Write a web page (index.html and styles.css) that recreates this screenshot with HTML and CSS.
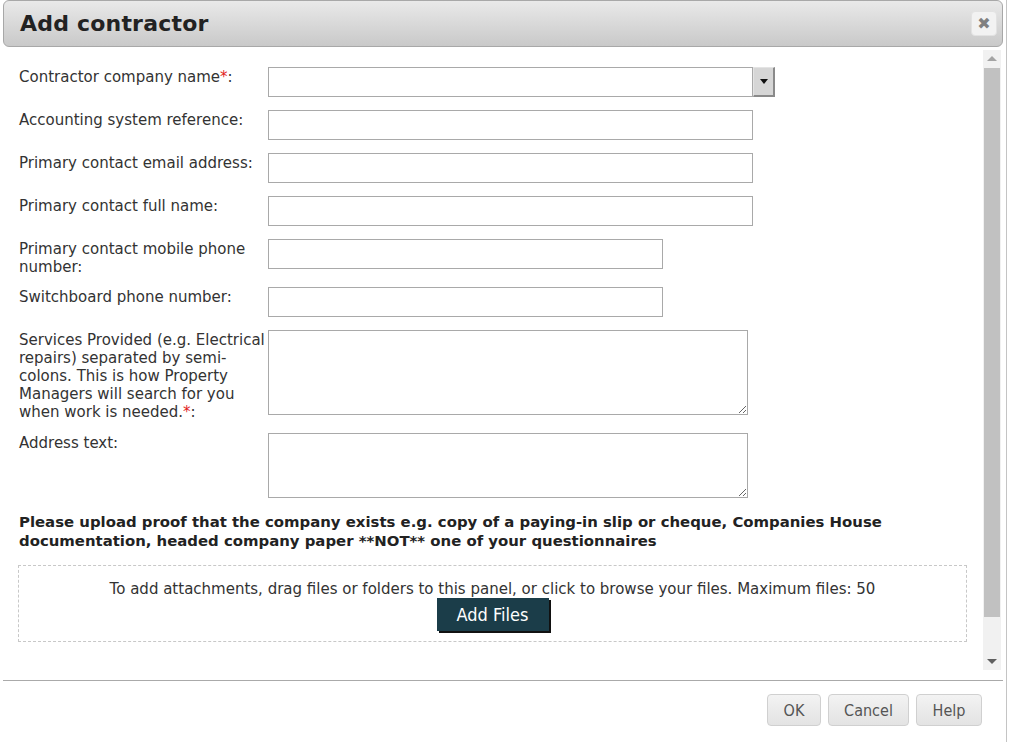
FILE: index.html
```html
<!DOCTYPE html>
<html>
<head>
<meta charset="utf-8">
<link rel="stylesheet" href="styles.css">
</head>
<body>
<div class="page">
  <div class="dialog">
    <div class="header">
      <h1 class="title">Add contractor</h1>
      <button class="close" type="button">&#x2716;</button>
    </div>
    <div class="content">
      <div class="form">
        <div class="row">
          <label class="label">Contractor company name<span class="req">*</span>:</label>
          <div class="combo">
            <input class="input input-wide" type="text">
            <span class="combo-btn"><span class="combo-arrow"></span></span>
          </div>
        </div>
        <div class="row">
          <label class="label">Accounting system reference:</label>
          <input class="input input-wide" type="text">
        </div>
        <div class="row">
          <label class="label">Primary contact email address:</label>
          <input class="input input-wide" type="text">
        </div>
        <div class="row">
          <label class="label">Primary contact full name:</label>
          <input class="input input-wide" type="text">
        </div>
        <div class="row row-tight">
          <label class="label">Primary contact mobile phone number:</label>
          <input class="input input-mid" type="text">
        </div>
        <div class="row">
          <label class="label">Switchboard phone number:</label>
          <input class="input input-mid" type="text">
        </div>
        <div class="row">
          <label class="label">Services Provided (e.g. Electrical repairs) separated by semi-colons. This is how Property Managers will search for you when work is needed.<span class="req">*</span>:</label>
          <textarea class="textarea textarea-tall"></textarea>
        </div>
        <div class="row">
          <label class="label">Address text:</label>
          <textarea class="textarea textarea-short"></textarea>
        </div>
        <p class="notice">Please upload proof that the company exists e.g. copy of a paying-in slip or cheque, Companies House documentation, headed company paper **NOT** one of your questionnaires</p>
        <div class="dropzone">
          <div class="drop-text">To add attachments, drag files or folders to this panel, or click to browse your files. Maximum files: 50</div>
          <button class="add-files" type="button">Add Files</button>
        </div>
      </div>
      <div class="scrollbar">
        <span class="arrow-up"></span>
        <div class="thumb"></div>
        <span class="arrow-down"></span>
      </div>
    </div>
    <div class="footer">
      <button class="btn btn-ok" type="button">OK</button>
      <button class="btn btn-cancel" type="button">Cancel</button>
      <button class="btn btn-help" type="button">Help</button>
    </div>
  </div>
  <div class="edge"></div>
</div>
</body>
</html>
```

FILE: styles.css
```css
html, body {
  margin: 0;
  padding: 0;
  background: #fff;
}

.page {
  position: relative;
  width: 1009px;
  height: 742px;
  overflow: hidden;
  font-family: "DejaVu Sans", Verdana, sans-serif;
  color: #333;
}

.dialog {
  margin-left: 3px;
  width: 1000px;
  display: flex;
  flex-direction: column;
}

.header {
  box-sizing: border-box;
  height: 47px;
  border: 1px solid #a8a8a8;
  border-radius: 6px;
  background: linear-gradient(#e9e9e9, #c9c9c9);
  display: flex;
  align-items: center;
  justify-content: space-between;
  padding: 0 5px 0 16px;
}

.title {
  margin: 0;
  font-size: 22px;
  font-weight: bold;
  color: #222;
  letter-spacing: 0.2px;
}

.close {
  width: 26px;
  height: 25px;
  border: 1px solid #e2e2e2;
  border-radius: 4px;
  background: #f2f2f2;
  color: #808080;
  font-size: 16px;
  line-height: 1;
  padding: 0;
  font-family: "DejaVu Sans", sans-serif;
}

.content {
  display: flex;
  height: 631px;
}

.form {
  flex: 1;
  padding: 20px 0 0 16px;
}

.row {
  display: flex;
  align-items: flex-start;
  margin-bottom: 13px;
}

.row-tight {
  margin-bottom: 12px;
}

.label {
  width: 249px;
  flex: none;
  margin: 1px 0 -1px 0;
  font-size: 15px;
  line-height: 18px;
  color: #333;
}

.req {
  color: #e21d1d;
}

.input {
  box-sizing: border-box;
  height: 30px;
  border: 1px solid #a9a9a9;
  border-radius: 0;
  margin: 0;
  padding: 0 4px;
  background: #fff;
}

.input-wide {
  width: 485px;
}

.input-mid {
  width: 395px;
}

.combo {
  display: flex;
}

.combo-btn {
  box-sizing: border-box;
  width: 22px;
  height: 30px;
  background: #d6d6d6;
  border-top: 1px solid #e4e4e4;
  border-left: 1px solid #e4e4e4;
  border-right: 2px solid #8a8a8a;
  border-bottom: 2px solid #8a8a8a;
  display: flex;
  align-items: center;
  justify-content: center;
}

.combo-arrow {
  width: 0;
  height: 0;
  border-left: 4px solid transparent;
  border-right: 4px solid transparent;
  border-top: 5px solid #111;
}

.textarea {
  box-sizing: border-box;
  width: 480px;
  border: 1px solid #a9a9a9;
  margin: 0;
  padding: 2px 4px;
  resize: both;
}

.textarea-tall {
  height: 85px;
}

.textarea-short {
  height: 65px;
}

.notice {
  margin: 15px 0 14px 0;
  font-size: 14.9px;
  line-height: 19px;
  font-weight: bold;
  color: #222;
}

.dropzone {
  box-sizing: border-box;
  width: 949px;
  height: 77px;
  margin-left: -1px;
  border: 1px dashed #c8c8c8;
  display: flex;
  flex-direction: column;
  align-items: center;
  padding-top: 14px;
}

.drop-text {
  font-size: 15px;
  line-height: 18px;
  color: #333;
}

.add-files {
  margin-top: 0;
  width: 112px;
  height: 33px;
  background: #1b3d49;
  color: #fff;
  border: none;
  box-shadow: 2px 2px 0 #111;
  font-family: "DejaVu Sans Condensed", "DejaVu Sans", sans-serif;
  font-size: 18px;
  padding: 0;
}

.scrollbar {
  width: 18px;
  margin: 3px 2px 8px 0;
  background: #f1f1f1;
  display: flex;
  flex-direction: column;
  align-items: center;
}

.arrow-up {
  margin-top: 6px;
  width: 0;
  height: 0;
  border-left: 5px solid transparent;
  border-right: 5px solid transparent;
  border-bottom: 5px solid #a3a3a3;
}

.thumb {
  margin-top: 7px;
  width: 16px;
  height: 549px;
  background: #c1c1c1;
}

.arrow-down {
  margin-top: 42px;
  width: 0;
  height: 0;
  border-left: 5px solid transparent;
  border-right: 5px solid transparent;
  border-top: 5px solid #606060;
}

.footer {
  border-top: 1px solid #aaaaaa;
  margin-top: 2px;
  padding: 13px 21px 0 0;
  display: flex;
  justify-content: flex-end;
  gap: 7px;
}

.btn {
  box-sizing: border-box;
  height: 32px;
  border: 1px solid #d0d0d0;
  border-radius: 4px;
  background: linear-gradient(#f3f3f3, #e3e3e3);
  color: #555;
  font-family: "DejaVu Sans Condensed", "DejaVu Sans", sans-serif;
  font-size: 16px;
  padding: 0;
}

.btn-ok {
  width: 54px;
}

.btn-cancel {
  width: 81px;
}

.btn-help {
  width: 66px;
}

.edge {
  position: absolute;
  top: 0;
  right: 2px;
  width: 1px;
  height: 742px;
  background: #c4c4c4;
}
```
